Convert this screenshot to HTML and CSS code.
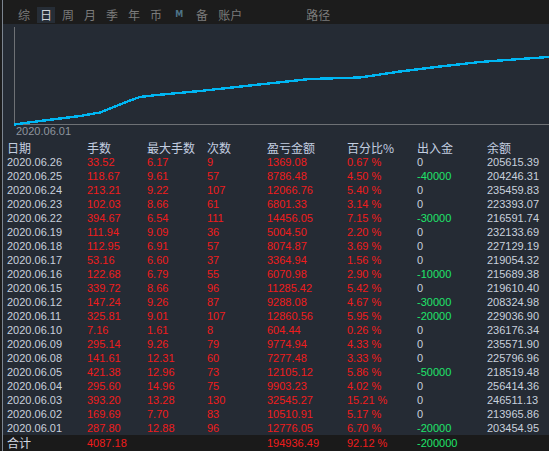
FILE: index.html
```html
<!DOCTYPE html>
<html lang="zh-CN">
<head>
    <meta charset="UTF-8">
    <title>账户统计</title>
    <link rel="stylesheet" href="styles.css">
</head>
<body>
    <div class="app">
        <div class="tabs">
            <span class="tab">综</span>
            <span class="tab active">日</span>
            <span class="tab">周</span>
            <span class="tab">月</span>
            <span class="tab">季</span>
            <span class="tab">年</span>
            <span class="tab">币</span>
            <span class="tab tab-m">M</span>
            <span class="tab">备</span>
            <span class="tab">账户</span>
            <span class="tab tab-path">路径</span>
        </div>

        <div class="chart">
            <svg width="546" height="117" viewBox="0 0 546 117">
                <line x1="11.5" y1="3" x2="11.5" y2="100" stroke="#6e7175" stroke-width="1"/>
                <line x1="11" y1="100.5" x2="546" y2="100.5" stroke="#6e7175" stroke-width="1"/>
                <polyline fill="none" stroke="#00b6f2" stroke-width="2.4" shape-rendering="crispEdges"
                    points="11,100.5 37,97 57,94.5 77,92 97,88.5 107,84.5 117,80.5 127,76.5 137,73 154,71 197,67 247,61.5 307,55 357,53.5 397,47.5 437,42.5 477,38 517,35 546,33"/>
                <text x="13" y="111" class="axis-label">2020.06.01</text>
            </svg>
        </div>

        <div class="table">
            <div class="row head">
                <span>日期</span>
                <span>手数</span>
                <span>最大手数</span>
                <span>次数</span>
                <span>盈亏金额</span>
                <span>百分比%</span>
                <span>出入金</span>
                <span>余额</span>
            </div>
            <div id="rows"></div>
            <div class="row total">
                <span class="label">合计</span>
                <span class="red">4087.18</span>
                <span></span>
                <span></span>
                <span class="red">194936.49</span>
                <span class="red">92.12 %</span>
                <span class="green">-200000</span>
                <span></span>
            </div>
        </div>
    </div>

    <script>
        const days = [
            ["2020.06.26", "33.52", "6.17", "9", "1369.08", "0.67 %", "0", "205615.39"],
            ["2020.06.25", "118.67", "9.61", "57", "8786.48", "4.50 %", "-40000", "204246.31"],
            ["2020.06.24", "213.21", "9.22", "107", "12066.76", "5.40 %", "0", "235459.83"],
            ["2020.06.23", "102.03", "8.66", "61", "6801.33", "3.14 %", "0", "223393.07"],
            ["2020.06.22", "394.67", "6.54", "111", "14456.05", "7.15 %", "-30000", "216591.74"],
            ["2020.06.19", "111.94", "9.09", "36", "5004.50", "2.20 %", "0", "232133.69"],
            ["2020.06.18", "112.95", "6.91", "57", "8074.87", "3.69 %", "0", "227129.19"],
            ["2020.06.17", "53.16", "6.60", "37", "3364.94", "1.56 %", "0", "219054.32"],
            ["2020.06.16", "122.68", "6.79", "55", "6070.98", "2.90 %", "-10000", "215689.38"],
            ["2020.06.15", "339.72", "8.66", "96", "11285.42", "5.42 %", "0", "219610.40"],
            ["2020.06.12", "147.24", "9.26", "87", "9288.08", "4.67 %", "-30000", "208324.98"],
            ["2020.06.11", "325.81", "9.01", "107", "12860.56", "5.95 %", "-20000", "229036.90"],
            ["2020.06.10", "7.16", "1.61", "8", "604.44", "0.26 %", "0", "236176.34"],
            ["2020.06.09", "295.14", "9.26", "79", "9774.94", "4.33 %", "0", "235571.90"],
            ["2020.06.08", "141.61", "12.31", "60", "7277.48", "3.33 %", "0", "225796.96"],
            ["2020.06.05", "421.38", "12.96", "73", "12105.12", "5.86 %", "-50000", "218519.48"],
            ["2020.06.04", "295.60", "14.96", "75", "9903.23", "4.02 %", "0", "256414.36"],
            ["2020.06.03", "393.20", "13.28", "130", "32545.27", "15.21 %", "0", "246511.13"],
            ["2020.06.02", "169.69", "7.70", "83", "10510.91", "5.17 %", "0", "213965.86"],
            ["2020.06.01", "287.80", "12.88", "96", "12776.05", "6.70 %", "-20000", "203454.95"]
        ];

        const rows = document.getElementById("rows");

        days.forEach(day => {
            const row = document.createElement("div");
            row.className = "row";
            const flowClass = day[6] === "0" ? "plain" : "green";
            row.innerHTML = `
                <span class="plain">${day[0]}</span>
                <span class="red">${day[1]}</span>
                <span class="red">${day[2]}</span>
                <span class="red">${day[3]}</span>
                <span class="red">${day[4]}</span>
                <span class="red">${day[5]}</span>
                <span class="${flowClass}">${day[6]}</span>
                <span class="plain">${day[7]}</span>
            `;
            rows.appendChild(row);
        });
    </script>
</body>
</html>
```

FILE: styles.css
```css
body {
    margin: 0;
    background-color: #1c1c1c;
    font-family: "Liberation Sans", Arial, sans-serif;
}

.app {
    margin-left: 2px;
    border-left: 1px solid #7c8590;
    height: 451px;
    background-color: #252b34;
    overflow: hidden;
}

.tabs {
    display: flex;
    gap: 4px;
    height: 24px;
    box-sizing: border-box;
    padding: 7px 0 1px 12px;
    background-color: #1c1c1c;
}

.tab {
    padding: 0 3px;
    height: 16px;
    line-height: 16px;
    font-family: "Noto Sans CJK SC", sans-serif;
    font-size: 12px;
    color: #7b7b7b;
}

.tab.active {
    background-color: #262d36;
    color: #d2d6dc;
}

.tab-m {
    width: 14px;
    text-align: center;
    font-family: "DejaVu Sans", sans-serif;
    font-size: 8px;
    font-weight: bold;
    color: #4e7488;
}

.tab-path {
    margin-left: 54px;
}

.chart {
    height: 117px;
}

.chart svg {
    display: block;
}

.axis-label {
    font-family: "Liberation Sans", Arial, sans-serif;
    font-size: 11px;
    fill: #8e959e;
}

.row {
    display: grid;
    grid-template-columns: 80px 60px 60px 60px 80px 70px 70px auto;
    padding-left: 4px;
    height: 14px;
    line-height: 14px;
    font-size: 11px;
    white-space: nowrap;
}

.row.head {
    font-family: "Noto Sans CJK SC", sans-serif;
    font-size: 12px;
    color: #c3cee0;
}

.row.total {
    height: 16px;
    line-height: 16px;
    background-color: #1a1a1a;
}

.total .label {
    font-family: "Noto Sans CJK SC", sans-serif;
    font-size: 12px;
    color: #d3d9e2;
}

.plain {
    color: #c8d0dc;
}

.red {
    color: #f01c1c;
}

.green {
    color: #1fe46a;
}
```
